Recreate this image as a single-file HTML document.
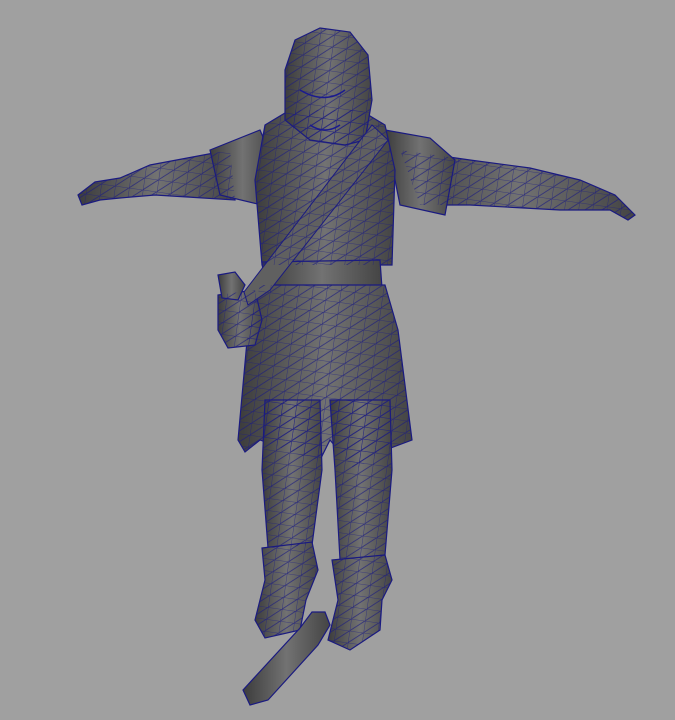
<!DOCTYPE html>
<html><head><meta charset="utf-8"><style>
html,body{margin:0;padding:0;background:#a0a0a0;width:675px;height:720px;overflow:hidden}
svg{display:block}
</style></head><body>
<svg width="675" height="720" viewBox="0 0 675 720" xmlns="http://www.w3.org/2000/svg">
<defs>
<pattern id="w" width="14" height="12" patternUnits="userSpaceOnUse" patternTransform="rotate(8)">
<rect width="14" height="12" fill="none"/>
<path d="M0 0H14M0 0V12M0 12L14 0" stroke="#1c1c80" stroke-width="0.8" fill="none" opacity="0.8"/>
</pattern>
<linearGradient id="g" x1="0" x2="1" y1="0" y2="0">
<stop offset="0" stop-color="#3c3c3c"/><stop offset="0.5" stop-color="#727272"/><stop offset="1" stop-color="#444"/>
</linearGradient>
</defs>
<g fill="url(#g)" stroke="#1a1a80" stroke-width="1.2">
<!-- arms -->
<polygon points="230,150 150,165 120,178 95,182 78,195 82,205 100,200 120,198 155,195 235,200"/>
<polygon points="400,150 470,160 530,168 580,180 615,195 635,215 628,220 610,210 560,210 470,205 420,205"/>
<!-- shoulders -->
<polygon points="210,150 260,130 275,165 262,205 220,195"/>
<polygon points="385,130 430,138 455,160 445,215 400,205"/>
<!-- torso -->
<polygon points="265,125 290,110 360,110 385,125 395,170 392,265 262,265 255,180"/>
<!-- belt -->
<polygon points="262,262 380,260 382,288 265,292"/>
<!-- coat -->
<polygon points="260,285 385,285 398,330 412,440 380,452 355,470 330,440 320,460 300,455 260,440 245,452 238,440 248,330"/>
<!-- legs -->
<polygon points="265,400 320,400 322,470 312,545 268,548 262,470"/>
<polygon points="330,400 390,400 392,470 385,555 340,560 335,470"/>
<!-- boots -->
<polygon points="262,548 312,542 318,570 306,600 300,630 265,638 255,620 265,580"/>
<polygon points="332,560 385,555 392,580 382,600 380,630 350,650 328,640 338,600"/>
<!-- sword -->
<polygon points="243,690 300,628 312,612 325,612 330,625 318,645 268,700 250,705"/>
<!-- bag -->
<polygon points="218,295 255,290 262,320 255,345 228,348 218,330"/>
<polygon points="218,275 235,272 245,285 238,300 222,298"/>
<!-- head -->
<polygon points="295,40 320,28 350,32 368,55 372,100 365,140 345,145 310,140 285,120 285,70"/>
</g>
<!-- strap -->
<polygon points="372,125 388,140 270,290 248,305 244,292" fill="#606060" stroke="#1a1a80" stroke-width="1"/>
<g fill="url(#w)">
<polygon points="230,150 150,165 120,178 95,182 78,195 82,205 100,200 120,198 155,195 235,200"/>
<polygon points="400,150 470,160 530,168 580,180 615,195 635,215 628,220 610,210 560,210 470,205 420,205"/>
<polygon points="265,125 290,110 360,110 385,125 395,170 392,265 262,265 255,180"/>
<polygon points="260,285 385,285 398,330 412,440 380,452 355,470 330,440 320,460 300,455 260,440 245,452 238,440 248,330"/>
<polygon points="265,400 320,400 322,470 312,545 268,548 262,470"/>
<polygon points="330,400 390,400 392,470 385,555 340,560 335,470"/>
<polygon points="262,548 312,542 318,570 306,600 300,630 265,638 255,620 265,580"/>
<polygon points="332,560 385,555 392,580 382,600 380,630 350,650 328,640 338,600"/>
<polygon points="295,40 320,28 350,32 368,55 372,100 365,140 345,145 310,140 285,120 285,70"/>
<polygon points="218,295 255,290 262,320 255,345 228,348 218,330"/>
</g>
<path d="M300 90 Q325 105 345 90 M310 125 Q325 135 340 125" stroke="#1a1a90" fill="none" stroke-width="1.5"/>
</svg>
</body></html>
